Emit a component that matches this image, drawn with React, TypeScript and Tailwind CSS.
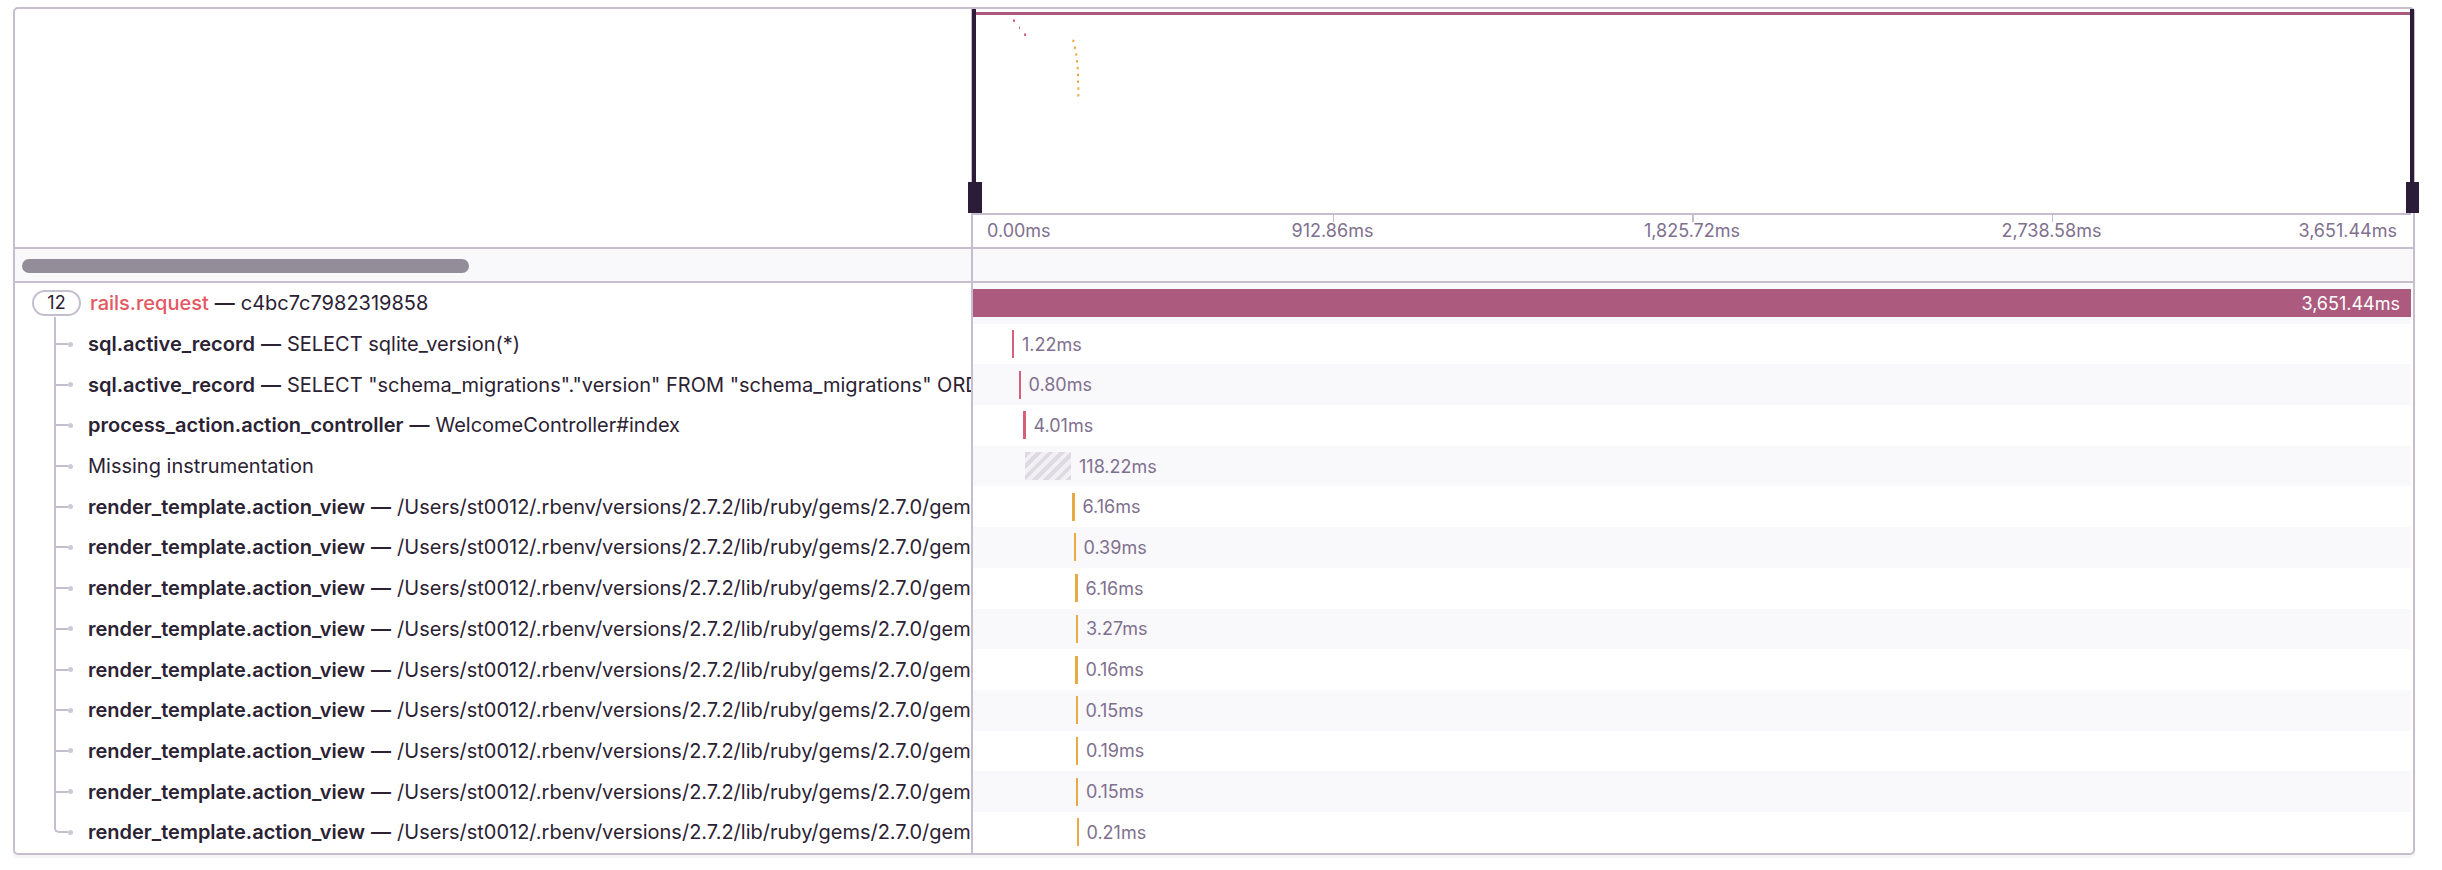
import React from "react";

const RED = "#d6607a";
const ORANGE = "#e9aa43";
const ROOT = "#ac5b7e";

type Row =
  | { kind: "root" }
  | {
      kind: "span";
      op?: string;
      desc: string;
      left: number;
      w: number;
      color: string;
      label: string;
      missing?: boolean;
    };

const RENDER_DESC =
  "/Users/st0012/.rbenv/versions/2.7.2/lib/ruby/gems/2.7.0/gems/actionview-6.1.1/lib/action_view/templates/rescues/layout.erb";

const renderSpans: [number, number, string][] = [
  [99, 2.5, "6.16ms"],
  [101, 1.5, "0.39ms"],
  [102, 2.5, "6.16ms"],
  [103, 2, "3.27ms"],
  [102, 2.5, "0.16ms"],
  [103, 1.5, "0.15ms"],
  [103, 2, "0.19ms"],
  [103, 2, "0.15ms"],
  [104, 1.5, "0.21ms"],
];

const rows: Row[] = [
  { kind: "root" },
  { kind: "span", op: "sql.active_record", desc: "SELECT sqlite_version(*)", left: 39, w: 2, color: RED, label: "1.22ms" },
  {
    kind: "span",
    op: "sql.active_record",
    desc: 'SELECT "schema_migrations"."version" FROM "schema_migrations" ORDER BY "schema_migrations"."version" ASC',
    left: 46,
    w: 1.5,
    color: RED,
    label: "0.80ms",
  },
  { kind: "span", op: "process_action.action_controller", desc: "WelcomeController#index", left: 50, w: 2.5, color: RED, label: "4.01ms" },
  { kind: "span", desc: "Missing instrumentation", left: 52, w: 46, color: RED, label: "118.22ms", missing: true },
  ...renderSpans.map(
    ([left, w, label]): Row => ({ kind: "span", op: "render_template.action_view", desc: RENDER_DESC, left, w, color: ORANGE, label })
  ),
];

function Minimap() {
  const marks: { x: number; y: number; w: number; c: string }[] = [
    { x: 40, y: 10.5, w: 2, c: RED },
    { x: 46, y: 17.5, w: 1, c: RED },
    { x: 51, y: 24.5, w: 2, c: RED },
  ];
  const ox = [99.3, 101, 102.3, 103, 103.7, 104, 104, 104.3, 104.3];
  ox.forEach((x, i) => marks.push({ x, y: 30.7 + i * 6.8, w: 2, c: ORANGE }));
  return (
    <svg width="1438" height="204" viewBox="0 0 1438 204" className="block">
      <rect x="0" y="3" width="1438" height="3" fill={ROOT} />
      {marks.map((m, i) => (
        <rect key={i} x={m.x} y={m.y} width={m.w} height="2.4" fill={m.c} />
      ))}
    </svg>
  );
}

function Connector({ last }: { last: boolean }) {
  return (
    <div className="flex h-full items-center pl-[39px]">
      {last ? (
        <div className="flex h-full w-[14px] flex-col">
          <div className="h-[calc(50%+1px)] rounded-bl-[5px] border-b-2 border-l-2 border-[#c6becf]" />
        </div>
      ) : (
        <div className="flex h-full w-[14px] items-center border-l-2 border-[#c6becf]">
          <div className="h-[2px] w-full bg-[#c6becf]" />
        </div>
      )}
      <div className="h-[5px] w-[5px] rounded-full bg-[#cfc8d7]" />
    </div>
  );
}

export default function App() {
  return (
    <div className="min-h-[870px] bg-white pl-[13px] pt-[7px] font-['Inter','Liberation_Sans',sans-serif] text-[#2b2233]">
      <div className="w-[2402px] rounded-[5px] border-2 border-[#c6becf] bg-white shadow-[0_3px_0_rgba(0,0,0,0.04)]">
        {/* header */}
        <div className="flex border-b-2 border-[#c6becf]">
          <div className="h-[238px] w-[958px] shrink-0 border-r-2 border-[#c6becf]" />
          <div className="flex w-[1438px] flex-col">
            <div className="relative h-[206px] border-b-2 border-[#c6becf]">
              <Minimap />
              <div className="absolute left-[-1px] top-0 h-[173px] w-[4px] bg-[#2b1d38]" />
              <div className="absolute left-[-5px] top-[173px] h-[31px] w-[14px] bg-[#2b1d38]" />
              <div className="absolute left-[1437px] top-0 h-[173px] w-[4px] bg-[#2b1d38]" />
              <div className="absolute left-[1433px] top-[173px] h-[31px] w-[13px] bg-[#2b1d38]" />
            </div>
            <div className="relative h-[32px] text-[18px] text-[#80708f]">
              <div className="absolute left-[359.5px] top-0 h-[7px] w-[1.5px] bg-[#c6becf]" />
              <div className="absolute left-[719px] top-0 h-[7px] w-[1.5px] bg-[#c6becf]" />
              <div className="absolute left-[1078.5px] top-0 h-[7px] w-[1.5px] bg-[#c6becf]" />
              <span className="absolute left-[14px] top-1/2 -translate-y-1/2 leading-none">0.00ms</span>
              <span className="absolute left-[359.5px] top-1/2 -translate-x-1/2 -translate-y-1/2 leading-none">912.86ms</span>
              <span className="absolute left-[719px] top-1/2 -translate-x-1/2 -translate-y-1/2 leading-none">1,825.72ms</span>
              <span className="absolute left-[1078.5px] top-1/2 -translate-x-1/2 -translate-y-1/2 leading-none">2,738.58ms</span>
              <span className="absolute right-[14px] top-1/2 -translate-y-1/2 leading-none">3,651.44ms</span>
            </div>
          </div>
        </div>

        {/* scrollbar row */}
        <div className="flex h-[34px] border-b-2 border-[#c6becf] bg-[#f9f8fb]">
          <div className="w-[958px] shrink-0 border-r-2 border-[#c6becf] pl-[7px] pt-[10px]">
            <div className="h-[14px] w-[447px] rounded-full bg-[#938c99]" />
          </div>
          <div className="flex-1" />
        </div>

        {/* rows */}
        <div className="flex flex-col">
          {rows.map((r, i) => {
            const last = i === rows.length - 1;
            const bg = i % 2 === 0 ? "bg-[#f9f8fb]" : "bg-white";
            return (
              <div key={i} className="flex h-[40.7px]">
                <div className="h-full w-[958px] shrink-0 overflow-hidden whitespace-nowrap border-r-2 border-[#c6becf] text-[20px]">
                  {r.kind === "root" ? (
                    <div className="flex h-full items-center">
                      <div className="relative ml-[17px] flex h-full w-[49px] items-center">
                        <div className="flex h-[26px] w-[49px] items-center justify-center rounded-full border-2 border-[#c6becf] text-[18px] leading-none">
                          12
                        </div>
                        <div className="absolute bottom-0 left-[22px] h-[7px] w-[2px] bg-[#c6becf]" />
                      </div>
                      <span className="ml-[9px] font-medium text-[#e4585f]">rails.request</span>
                      <span className="px-[6px] font-semibold">—</span>
                      <span>c4bc7c7982319858</span>
                    </div>
                  ) : (
                    <div className="flex h-full items-center">
                      <Connector last={last} />
                      <div className="ml-[15px] flex items-center">
                        {r.op ? (
                          <>
                            <span className="font-semibold">{r.op}</span>
                            <span className="px-[6px] font-semibold">—</span>
                            <span>{r.desc}</span>
                          </>
                        ) : (
                          <span>{r.desc}</span>
                        )}
                      </div>
                    </div>
                  )}
                </div>
                <div className={`relative h-full w-[1438px] ${bg}`}>
                  {r.kind === "root" ? (
                    <div
                      className="absolute inset-x-0 top-1/2 flex h-[28px] -translate-y-1/2 items-center justify-end pr-[11px] text-[18px] text-white"
                      style={{ background: ROOT }}
                    >
                      3,651.44ms
                    </div>
                  ) : (
                    <div className="absolute top-0 flex h-full items-center" style={{ left: r.left }}>
                      {r.missing ? (
                        <div
                          className="h-[28px] bg-[repeating-linear-gradient(-45deg,#dedae4_0px,#dedae4_4px,#f2f0f5_4px,#f2f0f5_8px)]"
                          style={{ width: r.w }}
                        />
                      ) : (
                        <div className="h-[28px]" style={{ width: r.w, background: r.color }} />
                      )}
                      <span className="ml-[8px] whitespace-nowrap text-[18px] text-[#80708f]">{r.label}</span>
                    </div>
                  )}
                </div>
              </div>
            );
          })}
        </div>
      </div>
    </div>
  );
}
